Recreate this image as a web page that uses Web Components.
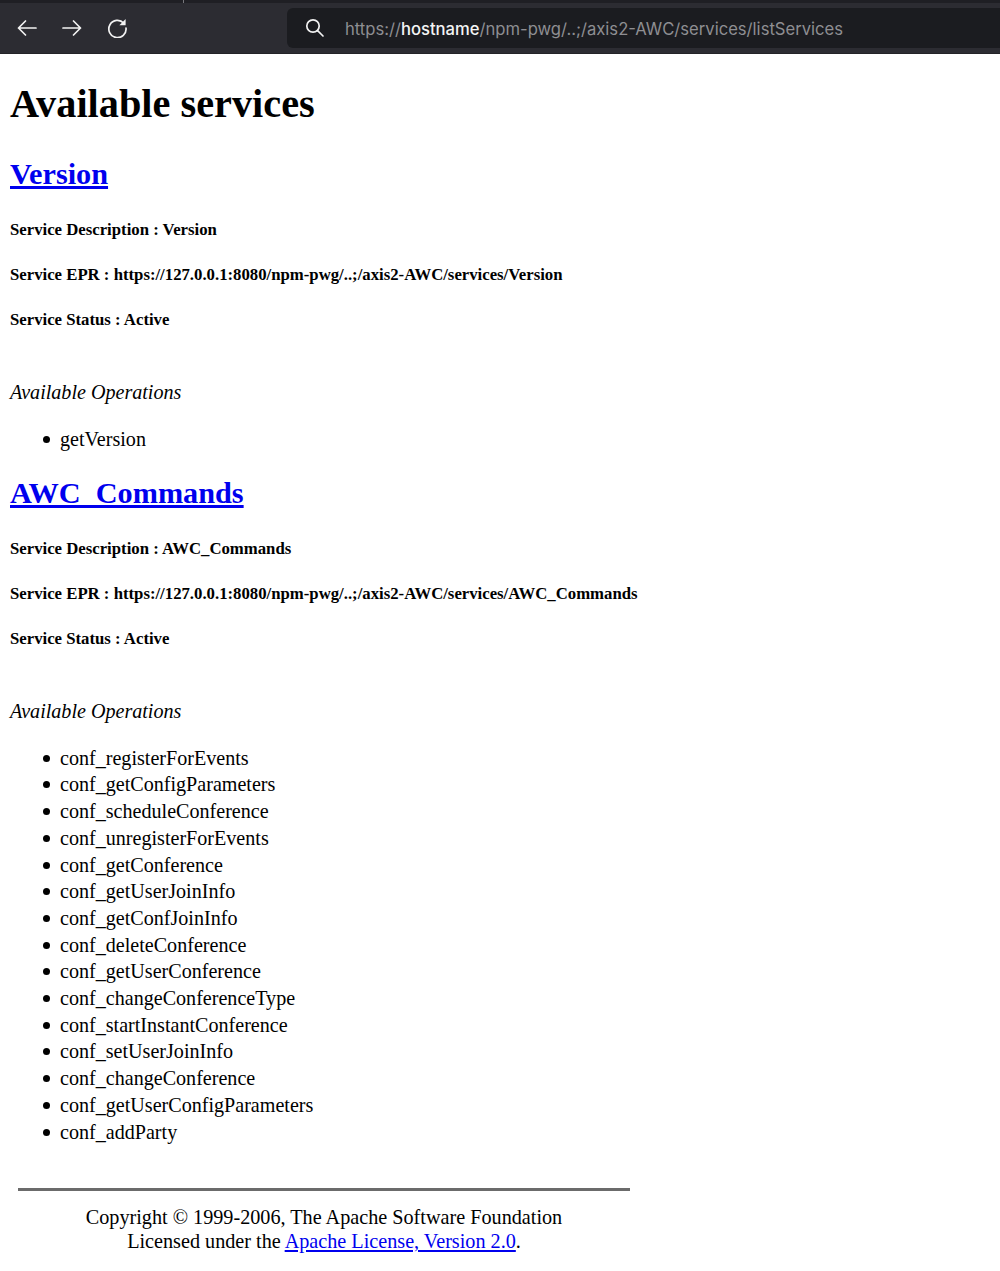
<!DOCTYPE html>
<html>
<head>
<meta charset="utf-8">
<title>Available services</title>
<style>
  html, body { margin: 0; padding: 0; background: #fff; }
  body { font-family: "Liberation Serif", serif; color: #000; }
</style>
</head>
<body>
<browser-bar url-host="hostname" url-path="/npm-pwg/..;/axis2-AWC/services/listServices"></browser-bar>
<services-page>
  <service-block name="Version" epr="https://127.0.0.1:8080/npm-pwg/..;/axis2-AWC/services/Version"
    ops="getVersion"></service-block>
  <service-block name="AWC_Commands" epr="https://127.0.0.1:8080/npm-pwg/..;/axis2-AWC/services/AWC_Commands"
    ops="conf_registerForEvents conf_getConfigParameters conf_scheduleConference conf_unregisterForEvents conf_getConference conf_getUserJoinInfo conf_getConfJoinInfo conf_deleteConference conf_getUserConference conf_changeConferenceType conf_startInstantConference conf_setUserJoinInfo conf_changeConference conf_getUserConfigParameters conf_addParty"></service-block>
</services-page>
<page-footer></page-footer>

<script>
var bar_template = document.createElement("template");
bar_template.innerHTML = `
<style>
  :host { display: block; position: relative; height: 54px; background: #2c2c32; box-sizing: border-box; border-top: 3px solid #1f1f24; border-bottom: 1px solid #232327; font-family: "Inter", "Liberation Sans", sans-serif; }
  #tick { position: absolute; left: 183px; top: -3px; width: 1px; height: 3px; background: #77777c; }
  #row { display: flex; align-items: center; height: 50px; padding-left: 17px; }
  svg { display: block; fill: none; stroke: #f2f2f2; stroke-width: 1.7; stroke-linecap: round; stroke-linejoin: round; }
  #nav { display: flex; gap: 25px; width: 270px; flex: none; }
  #box { flex: 1; height: 40px; background: #1b1c20; border-radius: 6px 0 0 6px; display: flex; align-items: center; padding-left: 18px; }
  #url { margin-left: 20px; padding-top: 1px; font-size: 16.63px; color: #8e8e92; white-space: nowrap; }
  #url b { font-weight: 500; color: #f4f4f4; }
</style>
<div id="tick"></div>
<div id="row">
  <div id="nav">
    <svg width="20" height="20" viewBox="0 0 20 20"><path d="M19 10H1.5M8.5 3 1.5 10l7 7"/></svg>
    <svg width="20" height="20" viewBox="0 0 20 20"><path d="M1 10h17.5M11.5 3l7 7-7 7"/></svg>
    <svg width="20" height="20" viewBox="0 0 20 20"><path d="M16.8 5.2A8.6 8.6 0 1 0 19 10"/><path d="M18.6 1v6.2h-6.2z" fill="#f2f2f2" stroke="none"/></svg>
  </div>
  <div id="box">
    <svg width="20" height="20" viewBox="0 0 20 20"><circle cx="8" cy="8" r="6.2"/><path d="M12.6 12.6 18 18"/></svg>
    <span id="url"></span>
  </div>
</div>`;

class BrowserBar extends HTMLElement {
  constructor() {
    super();
    this.attachShadow({mode: "open"});
    this.shadowRoot.appendChild(bar_template.content.cloneNode(true));
  }
  connectedCallback() {
    var url = this.shadowRoot.querySelector("#url");
    url.innerHTML = "https://<b>" + this.getAttribute("url-host") + "</b>" + this.getAttribute("url-path");
  }
}
customElements.define("browser-bar", BrowserBar);

var page_template = document.createElement("template");
page_template.innerHTML = `
<style>
  :host { display: block; padding: 0 10px; }
  h1 { font-size: 40.3px; line-height: 50px; margin: 25px 0 5px; font-weight: bold; }
  #list { display: block; }
</style>
<h1>Available services</h1>
<div id="list"><slot></slot></div>`;

class ServicesPage extends HTMLElement {
  constructor() {
    super();
    this.attachShadow({mode: "open"});
    this.shadowRoot.appendChild(page_template.content.cloneNode(true));
  }
}
customElements.define("services-page", ServicesPage);

var block_template = document.createElement("template");
block_template.innerHTML = `
<style>
  :host { display: block; padding-top: 22px; }
  h2 { font-size: 30.25px; line-height: 37px; margin: 0; font-weight: bold; }
  a { color: #0000ee; }
  p { font-size: 16.74px; line-height: 20px; font-weight: bold; margin: 0; }
  #meta { display: flex; flex-direction: column; gap: 25px; margin-top: 27px; }
  h3 { font-size: 20.1px; line-height: 25px; font-style: italic; font-weight: normal; margin: 50px 0 0; }
  ul { margin: 21px 0 0; padding: 0 0 0 50px; font-size: 20.1px; line-height: 26.7px; list-style: none; }
  li::before { content: ""; display: inline-block; width: 7px; height: 7px; border-radius: 50%; background: #000; margin: 0 10px 0 -17px; vertical-align: 3px; }
</style>
<h2><a href="#" id="name"></a></h2>
<div id="meta">
  <p id="desc"></p>
  <p id="epr"></p>
  <p>Service Status : Active</p>
</div>
<h3>Available Operations</h3>
<ul id="ops"></ul>`;

class ServiceBlock extends HTMLElement {
  constructor() {
    super();
    this.attachShadow({mode: "open"});
    this.shadowRoot.appendChild(block_template.content.cloneNode(true));
  }
  connectedCallback() {
    var name = this.getAttribute("name");
    var root = this.shadowRoot;
    root.querySelector("#name").textContent = name;
    root.querySelector("#desc").textContent = "Service Description : " + name;
    root.querySelector("#epr").textContent = "Service EPR : " + this.getAttribute("epr");
    var ul = root.querySelector("#ops");
    this.getAttribute("ops").split(" ").forEach(function (op) {
      var li = document.createElement("li");
      li.textContent = op;
      ul.appendChild(li);
    });
  }
}
customElements.define("service-block", ServiceBlock);

var footer_template = document.createElement("template");
footer_template.innerHTML = `
<style>
  :host { display: block; width: 612px; margin: 43px 0 0 18px; font-size: 20.2px; line-height: 24px; text-align: center; }
  hr { border: none; height: 3px; background: #6b6b6b; margin: 0 0 14px; }
  a { color: #0000ee; }
</style>
<hr>
<div>Copyright © 1999-2006, The Apache Software Foundation</div>
<div>Licensed under the <a href="#">Apache License, Version 2.0</a>.</div>`;

class PageFooter extends HTMLElement {
  constructor() {
    super();
    this.attachShadow({mode: "open"});
    this.shadowRoot.appendChild(footer_template.content.cloneNode(true));
  }
}
customElements.define("page-footer", PageFooter);
</script>
</body>
</html>
